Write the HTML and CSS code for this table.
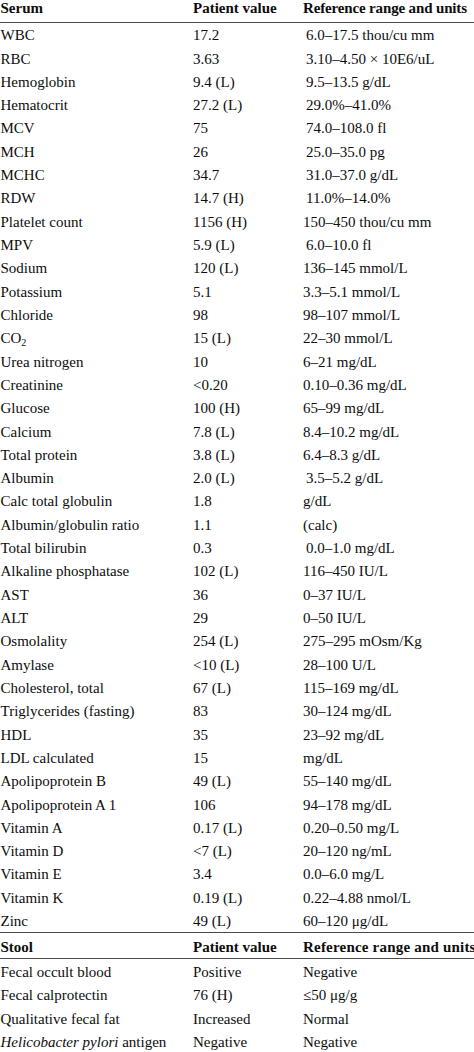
FILE: index.html
```html
<!DOCTYPE html>
<html lang="en">
<head>
<meta charset="utf-8">
<title>Laboratory values</title>
<link rel="stylesheet" href="styles.css">
</head>
<body>
<table class="labs">
  <colgroup><col class="c1"><col class="c2"><col class="c3"></colgroup>
  <thead>
    <tr class="head"><th>Serum</th><th>Patient value</th><th class="ref1">Reference range and units</th></tr>
  </thead>
  <tbody>
    <tr><td>WBC</td><td>17.2</td><td class="i">6.0–17.5 thou/cu mm</td></tr>
    <tr><td>RBC</td><td>3.63</td><td class="i">3.10–4.50 × 10E6/uL</td></tr>
    <tr><td>Hemoglobin</td><td>9.4 (L)</td><td class="i">9.5–13.5 g/dL</td></tr>
    <tr><td>Hematocrit</td><td>27.2 (L)</td><td class="i">29.0%–41.0%</td></tr>
    <tr><td>MCV</td><td>75</td><td class="i">74.0–108.0 fl</td></tr>
    <tr><td>MCH</td><td>26</td><td class="i">25.0–35.0 pg</td></tr>
    <tr><td>MCHC</td><td>34.7</td><td class="i">31.0–37.0 g/dL</td></tr>
    <tr><td>RDW</td><td>14.7 (H)</td><td class="i">11.0%–14.0%</td></tr>
    <tr><td>Platelet count</td><td>1156 (H)</td><td>150–450 thou/cu mm</td></tr>
    <tr><td>MPV</td><td>5.9 (L)</td><td class="i">6.0–10.0 fl</td></tr>
    <tr><td>Sodium</td><td>120 (L)</td><td>136–145 mmol/L</td></tr>
    <tr><td>Potassium</td><td>5.1</td><td>3.3–5.1 mmol/L</td></tr>
    <tr><td>Chloride</td><td>98</td><td>98–107 mmol/L</td></tr>
    <tr><td>CO<sub>2</sub></td><td>15 (L)</td><td>22–30 mmol/L</td></tr>
    <tr><td>Urea nitrogen</td><td>10</td><td>6–21 mg/dL</td></tr>
    <tr><td>Creatinine</td><td>&lt;0.20</td><td>0.10–0.36 mg/dL</td></tr>
    <tr><td>Glucose</td><td>100 (H)</td><td>65–99 mg/dL</td></tr>
    <tr><td>Calcium</td><td>7.8 (L)</td><td>8.4–10.2 mg/dL</td></tr>
    <tr><td>Total protein</td><td>3.8 (L)</td><td>6.4–8.3 g/dL</td></tr>
    <tr><td>Albumin</td><td>2.0 (L)</td><td class="i">3.5–5.2 g/dL</td></tr>
    <tr><td>Calc total globulin</td><td>1.8</td><td>g/dL</td></tr>
    <tr><td>Albumin/globulin ratio</td><td>1.1</td><td>(calc)</td></tr>
    <tr><td>Total bilirubin</td><td>0.3</td><td class="i">0.0–1.0 mg/dL</td></tr>
    <tr><td>Alkaline phosphatase</td><td>102 (L)</td><td>116–450 IU/L</td></tr>
    <tr><td>AST</td><td>36</td><td>0–37 IU/L</td></tr>
    <tr><td>ALT</td><td>29</td><td>0–50 IU/L</td></tr>
    <tr><td>Osmolality</td><td>254 (L)</td><td>275–295 mOsm/Kg</td></tr>
    <tr><td>Amylase</td><td>&lt;10 (L)</td><td>28–100 U/L</td></tr>
    <tr><td>Cholesterol, total</td><td>67 (L)</td><td>115–169 mg/dL</td></tr>
    <tr><td>Triglycerides (fasting)</td><td>83</td><td>30–124 mg/dL</td></tr>
    <tr><td>HDL</td><td>35</td><td>23–92 mg/dL</td></tr>
    <tr><td>LDL calculated</td><td>15</td><td>mg/dL</td></tr>
    <tr><td>Apolipoprotein B</td><td>49 (L)</td><td>55–140 mg/dL</td></tr>
    <tr><td>Apolipoprotein A 1</td><td>106</td><td>94–178 mg/dL</td></tr>
    <tr><td>Vitamin A</td><td>0.17 (L)</td><td>0.20–0.50 mg/L</td></tr>
    <tr><td>Vitamin D</td><td>&lt;7 (L)</td><td>20–120 ng/mL</td></tr>
    <tr><td>Vitamin E</td><td>3.4</td><td>0.0–6.0 mg/L</td></tr>
    <tr><td>Vitamin K</td><td>0.19 (L)</td><td>0.22–4.88 nmol/L</td></tr>
    <tr class="last"><td>Zinc</td><td>49 (L)</td><td>60–120 μg/dL</td></tr>
  </tbody>
  <tbody>
    <tr class="head2"><th>Stool</th><th>Patient value</th><th class="ref2">Reference range and units</th></tr>
    <tr><td>Fecal occult blood</td><td>Positive</td><td>Negative</td></tr>
    <tr><td>Fecal calprotectin</td><td>76 (H)</td><td>≤50 μg/g</td></tr>
    <tr><td>Qualitative fecal fat</td><td>Increased</td><td>Normal</td></tr>
    <tr><td><em>Helicobacter pylori</em> antigen</td><td>Negative</td><td>Negative</td></tr>
  </tbody>
</table>
</body>
</html>
```

FILE: styles.css
```css
html, body {
  margin: 0;
  padding: 0;
  background: #ffffff;
}

body {
  width: 474px;
  overflow: hidden;
  font-family: "Liberation Serif", "Times New Roman", serif;
  font-size: 15px;
  color: #0d0d0d;
}

.labs {
  width: 474px;
  border-collapse: separate;
  border-spacing: 0;
  table-layout: fixed;
}

.c1 { width: 193px; }
.c2 { width: 110px; }
.c3 { width: 171px; }

.labs th,
.labs td {
  padding: 0;
  text-align: left;
  vertical-align: top;
  white-space: nowrap;
  line-height: 17px;
}

.labs th {
  font-weight: bold;
}

.head th {
  height: 17px;
  padding-bottom: 4.5px;
  border-bottom: 1.5px solid #4a4a4a;
}

.labs th.ref1 {
  letter-spacing: -0.15px;
}

.labs th.ref2 {
  letter-spacing: 0.2px;
}

.labs td {
  height: 17px;
  padding-top: 4.7px;
  padding-bottom: 1.63px;
}

.labs td:first-child,
.labs th:first-child {
  padding-left: 0.5px;
}

.labs td.i {
  padding-left: 3px;
}

.last td {
  border-bottom: 1.5px solid #4a4a4a;
}

.head2 th {
  height: 17px;
  padding-top: 6.4px;
  padding-bottom: 2.3px;
  border-bottom: 1.5px solid #4a4a4a;
}

sub {
  font-size: 10px;
  line-height: 0;
  vertical-align: -3px;
}

em {
  font-style: italic;
}
```
